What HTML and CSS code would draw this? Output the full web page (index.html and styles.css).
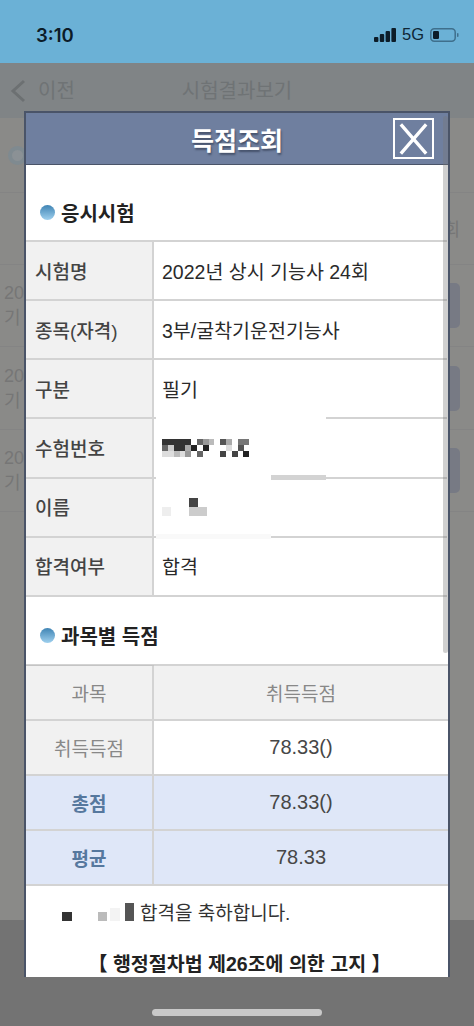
FILE: index.html
```html
<!DOCTYPE html>
<html lang="ko">
<head>
<meta charset="utf-8">
<title>득점조회</title>
<link rel="stylesheet" href="styles.css">
</head>
<body>
<div class="screen">
  <header class="status">
    <span class="time">3:10</span>
    <div class="status-icons">
      <svg class="signal" width="22" height="14" viewBox="0 0 22 14"><rect x="0" y="9" width="4.4" height="5" rx="1"/><rect x="5.8" y="6" width="4.4" height="8" rx="1"/><rect x="11.6" y="3" width="4.4" height="11" rx="1"/><rect x="17.4" y="0" width="4.6" height="14" rx="1"/></svg>
      <span class="net">5G</span>
      <svg class="battery" width="29" height="14" viewBox="0 0 29 14"><rect x="0.8" y="0.8" width="24.4" height="12.4" rx="3.5" fill="none" stroke="#3f6f8c" stroke-width="1.5"/><rect x="3" y="3" width="6" height="8" rx="1.2" fill="#0c1c28"/><rect x="27" y="5" width="1.5" height="4" rx="0.7" fill="#3f6f8c"/></svg>
    </div>
  </header>

  <nav class="nav">
    <svg class="back" width="16" height="24" viewBox="0 0 16 24"><path d="M14 2 L3 12 L14 22" fill="none" stroke="#6c7072" stroke-width="3"/></svg>
    <span class="back-label">이전</span>
    <span class="nav-title">시험결과보기</span>
  </nav>

  <main class="backdrop">
    <div class="bg-head"><span class="bg-dot"></span></div>
    <div class="bg-filter"><span>회</span></div>
    <div class="bg-row"><div class="bg-text"><span>20</span><span>기</span></div><span class="bg-btn"></span></div>
    <div class="bg-row"><div class="bg-text"><span>20</span><span>기</span></div><span class="bg-btn"></span></div>
    <div class="bg-row"><div class="bg-text"><span>20</span><span>기</span></div><span class="bg-btn"></span></div>
  </main>

  <footer class="bottom-band"><span class="home"></span></footer>

  <section class="modal">
    <div class="modal-head">
      <h1>득점조회</h1>
      <button class="close" aria-label="닫기"><svg width="38" height="38" viewBox="0 0 38 38"><path d="M6 4 L32 34 M32 4 L6 34" stroke="#fff" stroke-width="3.4" fill="none"/></svg></button>
    </div>
    <div class="modal-body">
      <h2 class="sec first"><span class="dot"></span>응시시험</h2>
      <div class="info">
        <div class="row"><div class="k">시험명</div><div class="v">2022년 상시 기능사 24회</div></div>
        <div class="row"><div class="k">종목(자격)</div><div class="v">3부/굴착기운전기능사</div></div>
        <div class="row"><div class="k">구분</div><div class="v">필기<i class="patch p1"></i></div></div>
        <div class="row"><div class="k">수험번호</div><div class="v">
          <svg class="mask" width="90" height="18" viewBox="0 0 90 18">
            <rect x="0" y="0" width="29" height="6" fill="#333"/><rect x="35" y="0" width="6" height="6" fill="#666"/><rect x="41" y="0" width="6" height="6" fill="#999"/><rect x="47" y="0" width="5" height="6" fill="#bbb"/><rect x="58" y="0" width="6" height="6" fill="#555"/><rect x="64" y="0" width="6" height="6" fill="#aaa"/><rect x="76" y="0" width="11" height="6" fill="#777"/>
            <rect x="0" y="6" width="6" height="6" fill="#666"/><rect x="6" y="6" width="6" height="6" fill="#ccc"/><rect x="12" y="6" width="11" height="6" fill="#333"/><rect x="23" y="6" width="6" height="6" fill="#aaa"/><rect x="29" y="6" width="6" height="6" fill="#222"/><rect x="41" y="6" width="6" height="6" fill="#222"/><rect x="64" y="6" width="6" height="6" fill="#ddd"/><rect x="76" y="6" width="6" height="6" fill="#555"/>
            <rect x="0" y="12" width="29" height="6" fill="#ddd"/><rect x="12" y="12" width="6" height="6" fill="#bbb"/><rect x="23" y="12" width="6" height="6" fill="#999"/><rect x="35" y="12" width="6" height="6" fill="#666"/><rect x="58" y="12" width="6" height="6" fill="#444"/><rect x="70" y="12" width="6" height="6" fill="#444"/><rect x="81" y="12" width="6" height="6" fill="#222"/>
          </svg><i class="patch p2"></i></div></div>
        <div class="row"><div class="k">이름</div><div class="v">
          <svg class="mask" width="46" height="18" viewBox="0 0 46 18"><rect x="0" y="9" width="9" height="9" fill="#eee"/><rect x="27" y="0" width="9" height="9" fill="#444"/><rect x="27" y="9" width="18" height="9" fill="#ccc"/></svg><i class="patch p3"></i></div></div>
        <div class="row"><div class="k">합격여부</div><div class="v">합격</div></div>
      </div>

      <h2 class="sec second"><span class="dot"></span>과목별 득점</h2>
      <div class="scores">
        <div class="srow hd"><div class="sk">과목</div><div class="sv">취득득점</div></div>
        <div class="srow"><div class="sk">취득득점</div><div class="sv">78.33()</div></div>
        <div class="srow blue"><div class="sk">총점</div><div class="sv">78.33()</div></div>
        <div class="srow blue"><div class="sk">평균</div><div class="sv">78.33</div></div>
      </div>

      <p class="congrats">
        <svg class="mask-inline" width="74" height="18" viewBox="0 0 74 18"><rect x="0" y="9" width="10" height="9" fill="#333"/><rect x="36" y="9" width="9" height="9" fill="#bbb"/><rect x="48" y="5" width="10" height="13" fill="#f3f3f3"/><rect x="63" y="0" width="9" height="18" fill="#555"/></svg>합격을 축하합니다.
      </p>
      <p class="notice">【 행정절차법 제26조에 의한 고지 】</p>
    </div>
    <span class="scrollbar"></span>
  </section>
</div>
</body>
</html>
```
FILE: styles.css
```css
* { box-sizing: border-box; }
html, body { margin: 0; padding: 0; }
body { font-family: "Liberation Sans", "Noto Sans CJK KR", sans-serif; background: #8a8a8a; }
.screen { position: relative; width: 474px; height: 1026px; overflow: hidden; display: flex; flex-direction: column; background: #8a8a8a; }

.status { height: 63px; background: #6bb1d6; display: flex; align-items: center; justify-content: space-between; padding: 6px 15px 0 36px; flex: none; }
.time { font-family: Inter, "Liberation Sans", sans-serif; font-size: 18.5px; font-weight: 600; color: #0c1c28; }
.status-icons { display: flex; align-items: center; gap: 6px; }
.signal { fill: #0c1c28; }
.net { font-size: 16.5px; color: #0f2635; width: 21px; }
.battery { margin-left: 1px; }

.nav { height: 55px; flex: none; background: #808486; display: flex; align-items: center; padding-left: 10px; position: relative; color: #6f7375; font-size: 20px; }
.back { margin-right: 12px; }
.nav-title { position: absolute; left: 0; right: 0; text-align: center; padding-bottom: 2px; }
.back-label { padding-bottom: 2px; }

.backdrop { flex: 1; background: #8a8a88; color: #767676; font-size: 18px; }
.bg-head { height: 75px; border-bottom: 1px solid #848484; padding: 28px 0 0 8px; }
.bg-dot { display: block; width: 19px; height: 19px; border-radius: 50%; border: 4px solid #7f8a90; background: #8b9195; }
.bg-filter { height: 72px; padding: 22px 14px 0 0; text-align: right; border-bottom: 1px solid #848484; }
.bg-row { height: 82.4px; border-bottom: 1px solid #848484; display: flex; justify-content: space-between; align-items: center; padding: 0 14px 0 4px; }
.bg-text { display: flex; flex-direction: column; gap: 3px; font-size: 18px; line-height: 22px; white-space: nowrap; }
.bg-btn { width: 40px; height: 45px; border-radius: 5px; background: #777a84; }

.bottom-band { height: 106px; flex: none; background: #737373; display: flex; justify-content: center; align-items: flex-end; padding-bottom: 10px; }
.home { width: 170px; height: 7px; border-radius: 4px; background: #c9c9c9; }

.modal { position: absolute; left: 24px; top: 111px; width: 426px; height: 866px; border: 2px solid #4a5468; border-bottom: 0; background: #fff; overflow: hidden; }
.modal-head { height: 52px; background: #6f7f9f; border-bottom: 1px solid #4a5468; display: flex; align-items: center; justify-content: center; position: relative; }
.modal-head h1 { margin: 0; font-size: 25px; font-weight: 700; color: #fff; text-shadow: 1px 2px 2px rgba(40, 50, 70, .6); }
.close { position: absolute; right: 14px; top: 5px; width: 41px; height: 41px; padding: 0; background: transparent; border: 2px solid #fff; display: flex; align-items: center; justify-content: center; }

.sec { margin: 0; display: flex; align-items: center; font-size: 20px; font-weight: 700; color: #222; padding-left: 14px; height: 30px; }
.sec.first { margin-top: 32px; margin-bottom: 13px; }
.sec.second { margin-top: 24px; margin-bottom: 13px; }
.dot { width: 15px; height: 15px; border-radius: 50%; margin-right: 6px; background: linear-gradient(#3f84b4, #9fd0ee); flex: none; }

.info { border-top: 2px solid #d3d3d3; margin-right: 1px; }
.row { height: 59.17px; display: grid; grid-template-columns: 128px 1fr; border-bottom: 2px solid #d3d3d3; }
.k { background: #f1f1f1; border-right: 2px solid #d3d3d3; padding: 0 0 1px 9px; display: flex; align-items: center; font-size: 19px; color: #444; font-weight: 500; }
.v { position: relative; padding: 0 0 1px 8px; display: flex; align-items: center; font-size: 19.5px; color: #2a2a2a; }
.mask { display: block; }
.patch { position: absolute; left: 2px; bottom: -3px; height: 5px; background: #fff; }
.p1 { width: 170px; }
.p2 { width: 170px; background: linear-gradient(90deg, #fff 115px, #d3d3d3 115px); }
.p3 { width: 115px; background: #f9f9f9; }

.scores { border-top: 2px solid #d3d3d3; }
.srow { height: 55px; display: grid; grid-template-columns: 128px 1fr; border-bottom: 2px solid #d3d3d3; text-align: center; font-size: 19px; background: #fff; }
.sk, .sv { display: flex; align-items: center; justify-content: center; }
.sk { background: #f1f1f1; border-right: 2px solid #d3d3d3; color: #888; }
.hd .sk { box-shadow: 0 -1px 0 #c4c4c4; }
.sv { color: #474747; font-size: 20px; }
.hd .sv { background: #f1f1f1; color: #888; font-size: 19px; }
.blue .sk, .blue .sv { background: #dfe7f8; }
.blue .sk { color: #56789e; font-weight: 700; }

.congrats { margin: 11px 0 0 36px; height: 30px; display: flex; align-items: center; font-size: 19px; color: #333; }
.mask-inline { margin: 0 4px 0 0; flex: none; }
.notice { margin: 21px 0 0; padding-left: 5px; text-align: center; font-size: 19.5px; font-weight: 700; color: #222; white-space: nowrap; }

.scrollbar { position: absolute; right: 0; top: 3px; width: 5px; height: 537px; border-radius: 3px; background: rgba(120, 120, 120, .35); }
```
